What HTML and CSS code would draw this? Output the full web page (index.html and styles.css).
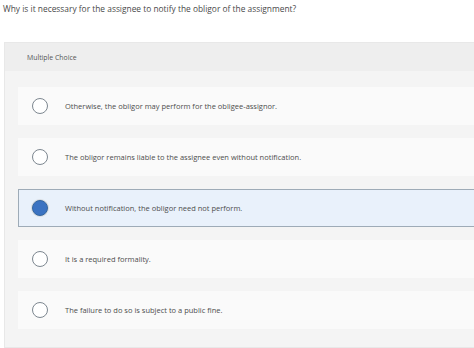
FILE: index.html
```html
<!DOCTYPE html>
<html lang="en">
<head>
    <meta charset="UTF-8">
    <meta name="viewport" content="width=device-width, initial-scale=1.0">
    <title>Multiple Choice</title>
    <link rel="stylesheet" href="styles.css">
</head>
<body>

    <p class="question">Why is it necessary for the assignee to notify the obligor of the assignment?</p>

    <div class="panel">
        <div class="panel-header">Multiple Choice</div>
        <div class="choices">
            <div class="choice">
                <span class="radio"></span>
                <span class="choice-text">Otherwise, the obligor may perform for the obligee-assignor.</span>
            </div>
            <div class="choice">
                <span class="radio"></span>
                <span class="choice-text">The obligor remains liable to the assignee even without notification.</span>
            </div>
            <div class="choice selected">
                <span class="radio"></span>
                <span class="choice-text">Without notification, the obligor need not perform.</span>
            </div>
            <div class="choice">
                <span class="radio"></span>
                <span class="choice-text">It is a required formality.</span>
            </div>
            <div class="choice">
                <span class="radio"></span>
                <span class="choice-text">The failure to do so is subject to a public fine.</span>
            </div>
        </div>
    </div>

</body>
</html>
```

FILE: styles.css
```css
/* Reset */
* {
    box-sizing: border-box;
    margin: 0;
    padding: 0;
}

body {
    font-family: "Open Sans", Lato, sans-serif;
    background-color: #fff;
    color: #555;
    overflow: hidden;
}

.question {
    font-size: 8.4px;
    color: #4a4a4a;
    padding: 3px 0 0 3px;
    height: 42px;
}

.panel {
    margin-left: 4px;
    width: 490px;
    background-color: #f4f4f4;
    border: 1px solid #e8e8e8;
}

.panel-header {
    height: 28px;
    padding-left: 22px;
    display: flex;
    align-items: center;
    font-size: 6.9px;
    color: #555;
    background-color: #eeeeee;
}

.choices {
    display: flex;
    flex-direction: column;
    gap: 13px;
    padding: 16px 0 18px 13px;
}

.choice {
    height: 38px;
    display: flex;
    align-items: center;
    padding-left: 13px;
    background-color: #fafafa;
    border: 1px solid transparent;
}

.choice .radio {
    width: 16px;
    height: 16px;
    border: 1px solid #7d8790;
    border-radius: 50%;
    background-color: #fff;
    flex-shrink: 0;
}

.choice-text {
    margin-left: 17px;
    font-size: 7.5px;
    color: #4d4d4d;
}

.choice.selected {
    background-color: #e9f1fb;
    border-color: #9eabb7;
}

.choice.selected .radio {
    background-color: #3b73c2;
    border-color: #35679f;
    box-shadow: 0 0 0 1px #d6dbe0;
}
```
